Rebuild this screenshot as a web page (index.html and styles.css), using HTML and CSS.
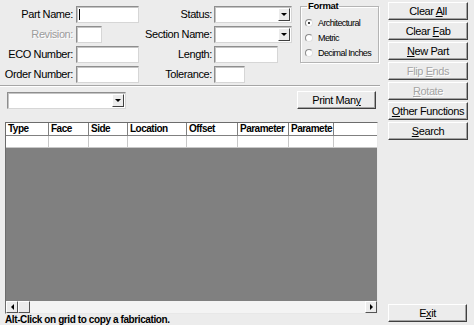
FILE: index.html
```html
<!DOCTYPE html>
<html lang="en">
<head>
    <meta charset="UTF-8">
    <meta name="viewport" content="width=device-width, initial-scale=1.0">
    <title>Part Fabrication</title>
    <link rel="stylesheet" href="styles.css">
</head>
<body>
    <div class="app">
        <div class="main">
            <div class="top">
                <div class="fields">
                    <span class="lbl">Part Name:</span>
                    <div class="box w63"><span class="caret"></span></div>
                    <span class="lbl disabled">Revision:</span>
                    <div class="box w26"></div>
                    <span class="lbl">ECO Number:</span>
                    <div class="box w63"></div>
                    <span class="lbl">Order Number:</span>
                    <div class="box w63"></div>
                </div>
                <div class="fields fields-b">
                    <span class="lbl">Status:</span>
                    <div class="box combo w78"><span class="drop"></span></div>
                    <span class="lbl">Section Name:</span>
                    <div class="box combo w78"><span class="drop"></span></div>
                    <span class="lbl">Length:</span>
                    <div class="box w64"></div>
                    <span class="lbl">Tolerance:</span>
                    <div class="box w31"></div>
                </div>
                <fieldset class="format">
                    <legend>Format</legend>
                    <div class="opt first"><span class="radio checked"></span>Architectural</div>
                    <div class="opt"><span class="radio"></span>Metric</div>
                    <div class="opt"><span class="radio"></span>Decimal Inches</div>
                </fieldset>
            </div>
            <div class="sep"></div>
            <div class="tools">
                <div class="box combo w119"><span class="drop"></span></div>
                <button class="btn print">Print Man<u>y</u></button>
            </div>
            <div class="grid">
                <div class="grid-head">
                    <span>Type</span>
                    <span>Face</span>
                    <span>Side</span>
                    <span>Location</span>
                    <span>Offset</span>
                    <span>Parameter</span>
                    <span>Paramete</span>
                    <span></span>
                </div>
                <div class="grid-row">
                    <span></span><span></span><span></span><span></span>
                    <span></span><span></span><span></span><span></span>
                </div>
                <div class="grid-empty"></div>
                <div class="hscroll">
                    <span class="sb-btn"><span class="arrow-left"></span></span>
                    <span class="sb-thumb"></span>
                    <span class="sb-track"></span>
                    <span class="sb-btn"><span class="arrow-right"></span></span>
                </div>
            </div>
            <div class="status">Alt-Click on grid to copy a fabrication.</div>
        </div>
        <div class="side">
            <button class="btn">Clear <u>A</u>ll</button>
            <button class="btn">Clear <u>F</u>ab</button>
            <button class="btn"><u>N</u>ew Part</button>
            <button class="btn disabled">Flip <u>E</u>nds</button>
            <button class="btn disabled"><u>R</u>otate</button>
            <button class="btn"><u>O</u>ther Functions</button>
            <button class="btn"><u>S</u>earch</button>
            <button class="btn exit">E<u>x</u>it</button>
        </div>
    </div>
</body>
</html>
```

FILE: styles.css
```css
body {
    margin: 0;
    width: 474px;
    height: 325px;
    overflow: hidden;
    background: #ececec;
    font-family: "Liberation Sans", Arial, sans-serif;
    font-size: 11px;
    letter-spacing: -0.4px;
    color: #000;
}

.app {
    display: flex;
    height: 325px;
}

.main {
    width: 380px;
    display: flex;
    flex-direction: column;
}

/* top form */
.top {
    display: flex;
    align-items: flex-start;
    height: 85px;
}

.fields {
    display: grid;
    grid-template-columns: 73px 63px;
    column-gap: 3px;
    row-gap: 3px;
    padding-top: 6px;
    align-items: center;
    justify-items: start;
}

.fields-b {
    grid-template-columns: 73px 78px;
    column-gap: 2px;
}

.lbl {
    justify-self: end;
    line-height: 17px;
    white-space: nowrap;
}

.disabled {
    color: #9c9c9c;
    text-shadow: 1px 1px #fff;
}

.box {
    box-sizing: border-box;
    height: 17px;
    background: #fff;
    border: 1px solid;
    border-color: #8e8e8e #d6d6d6 #d6d6d6 #8e8e8e;
    box-shadow: inset 1px 1px #c4c4c4;
}

.w26 { width: 26px; }
.w31 { width: 31px; }
.w63 { width: 63px; }
.w64 { width: 64px; }
.w78 { width: 78px; }
.w119 { width: 119px; }

.caret {
    display: block;
    width: 1px;
    height: 11px;
    margin: 2px 0 0 2px;
    background: #000;
}

.combo {
    display: flex;
    justify-content: flex-end;
    padding: 1px;
}

.drop {
    width: 12px;
    box-sizing: border-box;
    background: #ececec;
    border: 1px solid;
    border-color: #fff #404040 #404040 #fff;
    display: flex;
    align-items: center;
    justify-content: center;
}

.drop::after {
    content: "";
    border-left: 3px solid transparent;
    border-right: 3px solid transparent;
    border-top: 3px solid #000;
}

/* format group */
.format {
    box-sizing: border-box;
    width: 79px;
    height: 62px;
    margin: 1px 0 0 8px;
    padding: 0 0 0 4px;
    border: 1px solid #b4b4b4;
    box-shadow: inset 1px 1px #fff, 1px 1px #fff;
}

.format legend {
    font-size: 9.5px;
    font-weight: bold;
    letter-spacing: -0.3px;
    line-height: 10px;
    padding: 0 1px;
    margin-left: 2px;
}

.opt {
    display: flex;
    align-items: center;
    gap: 5px;
    height: 15px;
    font-size: 9px;
    letter-spacing: -0.6px;
    white-space: nowrap;
}

.opt.first {
    margin-top: 4px;
}

.radio {
    width: 8px;
    height: 8px;
    box-sizing: border-box;
    border-radius: 50%;
    background: #fff;
    border: 1px solid;
    border-color: #8a8a8a #e0e0e0 #e0e0e0 #8a8a8a;
    display: flex;
    align-items: center;
    justify-content: center;
}

.radio.checked::after {
    content: "";
    width: 2px;
    height: 2px;
    background: #000;
    border-radius: 1px;
}

.sep {
    border-top: 1px solid #a6a6a6;
    border-bottom: 1px solid #fff;
}

/* toolbar row */
.tools {
    display: flex;
    justify-content: space-between;
    align-items: flex-start;
    height: 17px;
    padding: 5px 4px 0 7px;
}

.btn {
    box-sizing: border-box;
    height: 18px;
    padding: 0;
    background: #ececec;
    border: 1px solid;
    border-color: #fff #404040 #404040 #fff;
    box-shadow: inset -1px -1px #a4a4a4;
    font: inherit;
    letter-spacing: inherit;
    color: #000;
    text-align: center;
    white-space: nowrap;
}

.btn.disabled {
    color: #a4a4a4;
}

.print {
    width: 79px;
    margin-top: -1px;
}

/* grid */
.grid {
    box-sizing: border-box;
    width: 373px;
    height: 192px;
    margin: 13px 0 0 5px;
    border: 1px solid;
    border-color: #6c6c6c #e8e8e8 #e8e8e8 #6c6c6c;
    display: flex;
    flex-direction: column;
    background: #808080;
}

.grid-head,
.grid-row {
    display: grid;
    grid-template-columns: 43px 40px 39px 59px 51px 51px 45px 1fr;
    background: #fff;
}

.grid-head span {
    height: 12px;
    line-height: 12px;
    padding-left: 2px;
    font-size: 10px;
    font-weight: bold;
    letter-spacing: -0.5px;
    border-right: 1px solid #808080;
    border-bottom: 1px solid #808080;
    overflow: hidden;
    white-space: nowrap;
}

.grid-row span {
    height: 11px;
    border-right: 1px solid #c8c8c8;
    border-bottom: 1px solid #c8c8c8;
}

.grid-head span:last-child,
.grid-row span:last-child {
    border-right: none;
}

.grid-empty {
    flex: 1;
}

.hscroll {
    display: flex;
    height: 12px;
    background: #f4f4f4;
}

.sb-btn,
.sb-thumb {
    width: 12px;
    box-sizing: border-box;
    background: #ececec;
    border: 1px solid;
    border-color: #fff #555 #555 #fff;
    display: flex;
    align-items: center;
    justify-content: center;
}

.sb-track {
    flex: 1;
}

.arrow-left {
    border-top: 3px solid transparent;
    border-bottom: 3px solid transparent;
    border-right: 3px solid #000;
}

.arrow-right {
    border-top: 3px solid transparent;
    border-bottom: 3px solid transparent;
    border-left: 3px solid #000;
}

.status {
    padding-left: 5px;
    font-size: 10px;
    font-weight: bold;
    line-height: 11px;
    white-space: nowrap;
}

/* right column */
.side {
    width: 80px;
    margin-left: 8px;
    padding-top: 2px;
    display: flex;
    flex-direction: column;
    gap: 2px;
}

.exit {
    margin-top: auto;
    margin-bottom: 3px;
    width: 79px;
}
```
